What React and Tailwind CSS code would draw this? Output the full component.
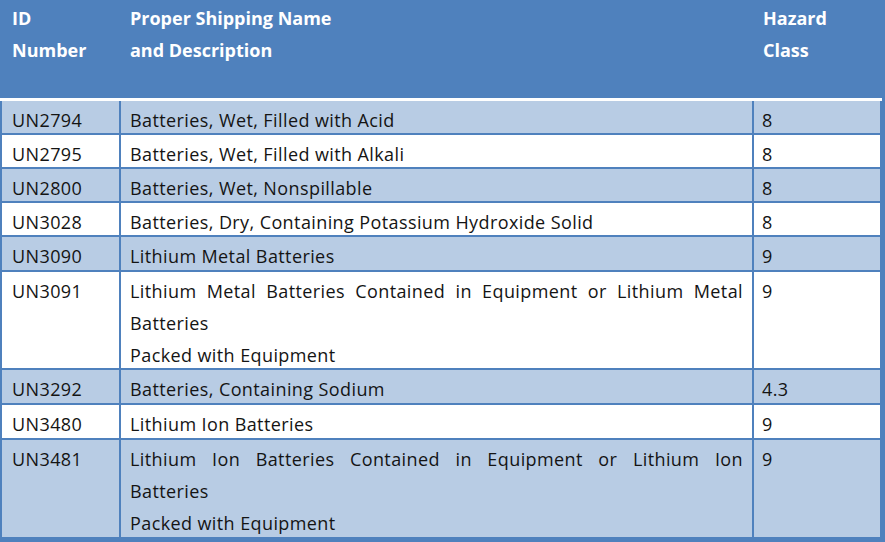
import React from "react";

const rows = [
  { id: "UN2794", name: "Batteries, Wet, Filled with Acid", cls: "8", band: true, h: "h-[34px]" },
  { id: "UN2795", name: "Batteries, Wet, Filled with Alkali", cls: "8", band: false, h: "h-[34px]" },
  { id: "UN2800", name: "Batteries, Wet, Nonspillable", cls: "8", band: true, h: "h-[34px]" },
  { id: "UN3028", name: "Batteries, Dry, Containing Potassium Hydroxide Solid", cls: "8", band: false, h: "h-[34px]" },
  { id: "UN3090", name: "Lithium Metal Batteries", cls: "9", band: true, h: "h-[35px]" },
  {
    id: "UN3091",
    lines: ["Lithium Metal Batteries Contained in Equipment or Lithium Metal", "Batteries", "Packed with Equipment"],
    cls: "9",
    band: false,
    h: "h-[98px]",
  },
  { id: "UN3292", name: "Batteries, Containing Sodium", cls: "4.3", band: true, h: "h-[35px]" },
  { id: "UN3480", name: "Lithium Ion Batteries", cls: "9", band: false, h: "h-[35px]" },
  {
    id: "UN3481",
    lines: ["Lithium Ion Batteries Contained in Equipment or Lithium Ion", "Batteries", "Packed with Equipment"],
    cls: "9",
    band: true,
    h: "h-[99px]",
  },
];

export default function App() {
  return (
    <div className="w-[885px] h-[542px] bg-[#4f81bd] overflow-hidden font-['Open_Sans','Noto_Sans',sans-serif] text-[18px] leading-[32px]">
      <div className="h-[98px] grid grid-cols-[121px_633px_1fr] pl-[2px] pt-[2px] text-white font-bold">
        <div className="pl-[10px]">
          <div>ID</div>
          <div>Number</div>
        </div>
        <div className="pl-[7px]">
          <div>Proper Shipping Name</div>
          <div>and Description</div>
        </div>
        <div className="pl-[7px]">
          <div>Hazard</div>
          <div>Class</div>
        </div>
      </div>
      <div className="w-[882px] bg-white pt-[3px]">
        <div className="border-l-2 border-r-2 border-[#4f81bd] text-[#141414] tracking-[0.4px]">
          {rows.map((r) => (
            <div
              key={r.id}
              className={
                "grid grid-cols-[119px_633px_1fr] border-b-2 border-[#4f81bd] " +
                r.h +
                " " +
                (r.band ? "bg-[#b8cce4]" : "bg-white")
              }
            >
              <div className="pl-[10px] pt-[3px] border-r-2 border-[#4f81bd]">{r.id}</div>
              <div className="pl-[9px] pr-[9px] pt-[3px] border-r-2 border-[#4f81bd]">
                {r.lines ? (
                  <>
                    <div className="text-justify [text-align-last:justify]">{r.lines[0]}</div>
                    <div>{r.lines[1]}</div>
                    <div>{r.lines[2]}</div>
                  </>
                ) : (
                  r.name
                )}
              </div>
              <div className="pl-[8px] pt-[3px]">{r.cls}</div>
            </div>
          ))}
        </div>
      </div>
    </div>
  );
}
